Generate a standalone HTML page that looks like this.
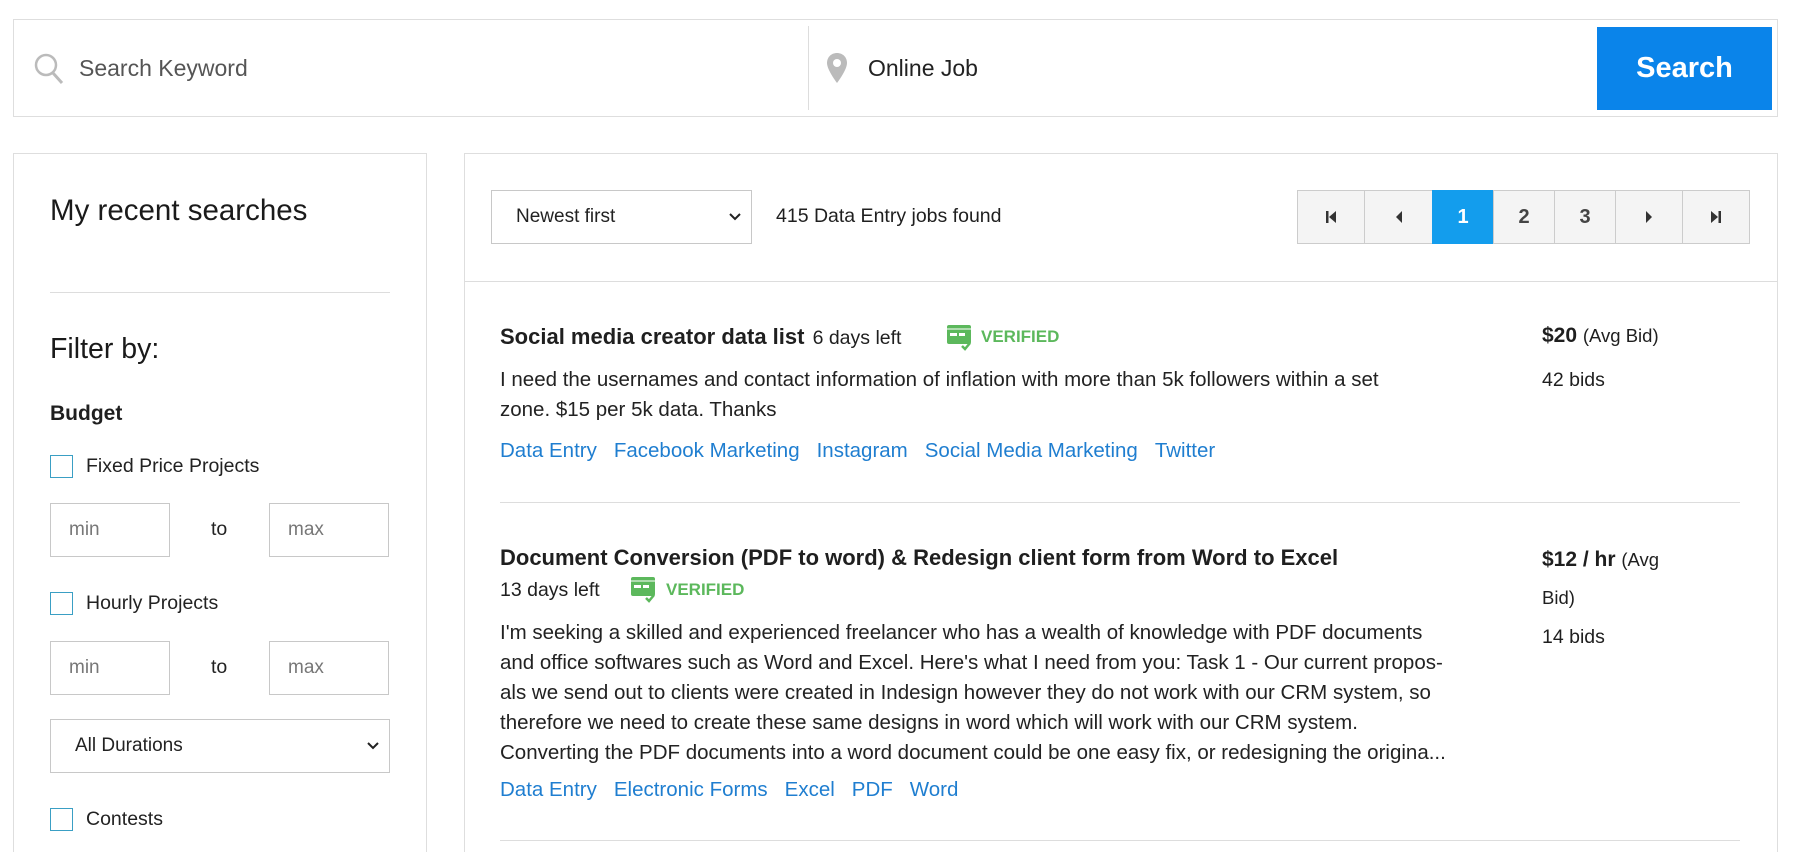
<!DOCTYPE html>
<html><head><meta charset="utf-8"><style>
*{box-sizing:border-box;margin:0;padding:0}
html,body{width:1798px;height:852px;overflow:hidden}
body{background:#fff;font-family:"Liberation Sans",Arial,sans-serif;color:#1f1f1f;position:relative}
.a{position:absolute}
.box{border:1px solid #dedede}
.inp{border:1px solid #c8c8c8;color:#777;font-size:19px;padding-left:18px;line-height:52px}
.cb{width:23px;height:23px;border:1px solid #3a9fc4;background:#fff}
.lbl{font-size:19.5px;color:#222}
.tag{color:#1f7ed0;font-size:20.5px}
.desc{font-size:20.5px;line-height:30px;color:#222;white-space:nowrap}
.pg{border:1px solid #ccc;background:#f4f4f4;height:54px;display:flex;align-items:center;justify-content:center;font-weight:bold;font-size:20px;color:#444;border-right:none}
.ver{color:#5cb85c;font-weight:bold;font-size:17px}
</style></head><body>
<div class="a box" style="left:13px;top:19px;width:1765px;height:98px"></div>
<svg class="a" style="left:34px;top:53px" width="30" height="32" viewBox="0 0 30 32"><circle cx="12" cy="12" r="10" fill="none" stroke="#bbb" stroke-width="2.5"/><line x1="19" y1="20" x2="28" y2="30" stroke="#bbb" stroke-width="3"/></svg>
<div class="a" style="left:79px;top:55px;font-size:23px;color:#555">Search Keyword</div>
<div class="a" style="left:808px;top:26px;width:1px;height:84px;background:#ddd"></div>
<svg class="a" style="left:826px;top:52px" width="22" height="32" viewBox="0 0 22 32"><path d="M11 1C5 1 1 5.5 1 11c0 7 10 20 10 20s10-13 10-20C21 5.5 17 1 11 1z" fill="#bbb"/><circle cx="11" cy="11" r="4" fill="#fff"/></svg>
<div class="a" style="left:868px;top:55px;font-size:23px;color:#222">Online Job</div>
<div class="a" style="left:1597px;top:27px;width:175px;height:83px;background:#0a84ea;color:#fff;font-weight:bold;font-size:29px;display:flex;align-items:center;justify-content:center">Search</div>

<div class="a box" style="left:13px;top:153px;width:414px;height:699px;border-bottom:none"></div>
<div class="a" style="left:50px;top:194px;font-size:29.5px;color:#1a1a1a">My recent searches</div>
<div class="a" style="left:50px;top:292px;width:340px;height:1px;background:#ddd"></div>
<div class="a" style="left:50px;top:333px;font-size:28.5px;color:#1a1a1a">Filter by:</div>
<div class="a" style="left:50px;top:402px;font-size:21px;font-weight:bold">Budget</div>
<div class="a cb" style="left:50px;top:455px"></div><div class="a lbl" style="left:86px;top:455px">Fixed Price Projects</div>
<div class="a inp" style="left:50px;top:503px;width:120px;height:54px">min</div>
<div class="a lbl" style="left:211px;top:518px">to</div>
<div class="a inp" style="left:269px;top:503px;width:120px;height:54px">max</div>
<div class="a cb" style="left:50px;top:592px"></div><div class="a lbl" style="left:86px;top:592px">Hourly Projects</div>
<div class="a inp" style="left:50px;top:641px;width:120px;height:54px">min</div>
<div class="a lbl" style="left:211px;top:656px">to</div>
<div class="a inp" style="left:269px;top:641px;width:120px;height:54px">max</div>
<div class="a inp" style="left:50px;top:719px;width:340px;height:54px;color:#222;padding-left:24px">All Durations<svg style="position:absolute;right:10px;top:21px" width="12" height="10" viewBox="0 0 12 10"><path d="M1 2l5 5 5-5" stroke="#222" stroke-width="2" fill="none"/></svg></div>
<div class="a cb" style="left:50px;top:808px"></div><div class="a lbl" style="left:86px;top:808px">Contests</div>

<div class="a box" style="left:464px;top:153px;width:1314px;height:699px;border-bottom:none"></div>
<div class="a inp" style="left:491px;top:190px;width:261px;height:54px;color:#222;padding-left:24px">Newest first<svg style="position:absolute;right:10px;top:21px" width="12" height="10" viewBox="0 0 12 10"><path d="M1 2l5 5 5-5" stroke="#222" stroke-width="2" fill="none"/></svg></div>
<div class="a" style="left:776px;top:205px;font-size:19.5px">415 Data Entry jobs found</div>
<div class="a" style="left:1297px;top:190px;display:flex">
<div class="pg" style="width:67px"><svg width="14" height="14" viewBox="0 0 14 14"><rect x="2" y="1" width="2.5" height="12" fill="#333"/><path d="M12 1v12L5 7z" fill="#333"/></svg></div>
<div class="pg" style="width:68px"><svg width="10" height="14" viewBox="0 0 10 14"><path d="M8 1v12L2 7z" fill="#333"/></svg></div>
<div class="pg" style="width:61px;background:#139ded;color:#fff;border-color:#139ded">1</div><div class="pg" style="width:61px">2</div><div class="pg" style="width:61px">3</div>
<div class="pg" style="width:67px"><svg width="10" height="14" viewBox="0 0 10 14"><path d="M2 1v12L8 7z" fill="#333"/></svg></div>
<div class="pg" style="width:68px;border-right:1px solid #ccc"><svg width="14" height="14" viewBox="0 0 14 14"><path d="M2 1v12L9 7z" fill="#333"/><rect x="9.5" y="1" width="2.5" height="12" fill="#333"/></svg></div>
</div>
<div class="a" style="left:464px;top:281px;width:1314px;height:1px;background:#ddd"></div>

<div class="a" style="left:500px;top:324px;font-size:22px;font-weight:bold">Social media creator data list <span style="font-weight:normal;font-size:19.5px;margin-left:2px">6 days left</span></div>
<svg class="a" style="left:946px;top:323px" width="30" height="30" viewBox="0 0 30 30"><rect x="1" y="2" width="24" height="19" rx="2" fill="#5cb85c"/><rect x="1" y="5" width="24" height="2" fill="#fff" opacity=".5"/><rect x="4" y="10" width="7" height="3" fill="#fff"/><rect x="13" y="10" width="6" height="3" fill="#fff"/><path d="M16 23l3 3 5-6" stroke="#5cb85c" stroke-width="2.5" fill="none"/></svg>
<div class="a ver" style="left:981px;top:327px">VERIFIED</div>
<div class="a desc" style="left:500px;top:365px">I need the usernames and contact information of inflation with more than 5k followers within a set<br>zone. $15 per 5k data. Thanks</div>
<div class="a" style="left:500px;top:439px;display:flex;gap:17px"><span class="tag">Data Entry</span><span class="tag">Facebook Marketing</span><span class="tag">Instagram</span><span class="tag">Social Media Marketing</span><span class="tag">Twitter</span></div>
<div class="a" style="left:1542px;top:324px;font-size:21px;font-weight:bold">$20 <span style="font-weight:normal;font-size:18.5px">(Avg Bid)</span></div>
<div class="a" style="left:1542px;top:369px;font-size:19.5px">42 bids</div>
<div class="a" style="left:500px;top:502px;width:1240px;height:1px;background:#ddd"></div>

<div class="a" style="left:500px;top:545px;font-size:22px;font-weight:bold">Document Conversion (PDF to word) &amp; Redesign client form from Word to Excel</div>
<div class="a" style="left:500px;top:579px;font-size:19.5px">13 days left</div>
<svg class="a" style="left:630px;top:575px" width="30" height="30" viewBox="0 0 30 30"><rect x="1" y="2" width="24" height="19" rx="2" fill="#5cb85c"/><rect x="1" y="5" width="24" height="2" fill="#fff" opacity=".5"/><rect x="4" y="10" width="7" height="3" fill="#fff"/><rect x="13" y="10" width="6" height="3" fill="#fff"/><path d="M16 23l3 3 5-6" stroke="#5cb85c" stroke-width="2.5" fill="none"/></svg>
<div class="a ver" style="left:666px;top:580px">VERIFIED</div>
<div class="a desc" style="left:500px;top:618px">I'm seeking a skilled and experienced freelancer who has a wealth of knowledge with PDF documents<br>and office softwares such as Word and Excel. Here's what I need from you: Task 1 - Our current propos-<br>als we send out to clients were created in Indesign however they do not work with our CRM system, so<br>therefore we need to create these same designs in word which will work with our CRM system.<br>Converting the PDF documents into a word document could be one easy fix, or redesigning the origina...</div>
<div class="a" style="left:500px;top:778px;display:flex;gap:17px"><span class="tag">Data Entry</span><span class="tag">Electronic Forms</span><span class="tag">Excel</span><span class="tag">PDF</span><span class="tag">Word</span></div>
<div class="a" style="left:1542px;top:541px;font-size:21px;font-weight:bold;line-height:38px;width:140px">$12 / hr <span style="font-weight:normal;font-size:18.5px">(Avg Bid)</span></div>
<div class="a" style="left:1542px;top:626px;font-size:19.5px">14 bids</div>
<div class="a" style="left:500px;top:840px;width:1240px;height:1px;background:#ddd"></div>
</body></html>
